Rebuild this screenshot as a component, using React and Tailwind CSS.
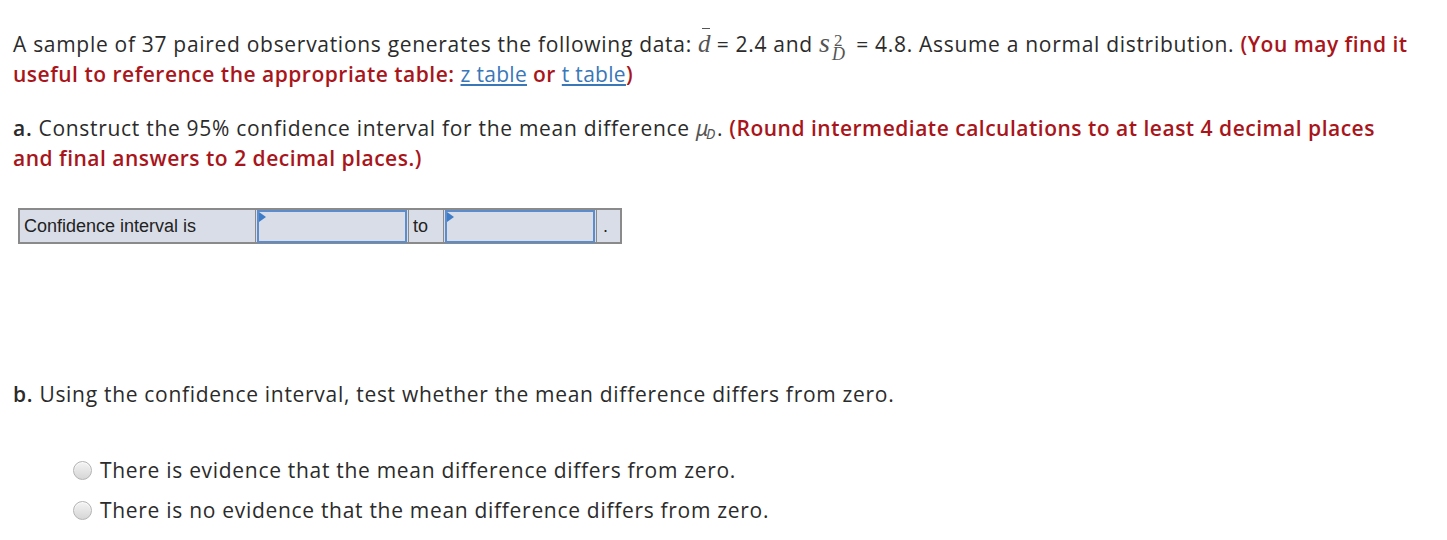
import React from 'react';

const red = 'text-[#a8151b] font-semibold tracking-[0.5px]';

function Radio({ children }) {
  return (
    <label className="flex items-center gap-[8px] h-[40px]">
      <span className="w-[19px] h-[19px] rounded-full border border-[#b3b3b3] bg-gradient-to-b from-[#f4f4f4] to-[#d6d6d6] shadow-[inset_0_1px_1px_rgba(255,255,255,0.8)]" />
      <span>{children}</span>
    </label>
  );
}

function Cell({ children, className = '' }) {
  return (
    <div className={`h-full flex items-center border-r border-[#8a8a8a] ${className}`}>{children}</div>
  );
}

function Field() {
  return (
    <div className="relative h-[33px] w-[150px] border-2 border-[#5d8ccc] bg-[#d9dde8] mx-[1px]">
      <span className="absolute left-0 top-0 w-0 h-0 border-t-[5px] border-b-[5px] border-l-[7px] border-t-transparent border-b-transparent border-l-[#3f7cc8]" />
    </div>
  );
}

export default function App() {
  return (
    <div className="bg-white w-[1447px] h-[540px] pl-[13px] pt-[29px] text-[21px] leading-[30px] tracking-[0.7px] text-[#2b2b2b]" style={{ fontFamily: '"Open Sans", Lato, sans-serif' }}>
      <div className="w-[1400px]">
        <p>
          A sample of 37 paired observations generates the following data:{' '}
          <span className="relative inline-block h-[20px] leading-[20px] tracking-normal" style={{ fontFamily: '"Liberation Serif", serif' }}>
            <span className="italic text-[25px] text-[#555]">d</span>
            <span className="absolute left-[4px] top-[-6px] w-[8px] border-t border-[#555]" />
          </span>{' '}
          = 2.4 and{' '}
          <span className="relative inline-block w-[31px] h-[20px] leading-[20px] tracking-normal text-[#555]" style={{ fontFamily: '"Liberation Serif", serif' }}>
            <span className="italic text-[28px]">s</span>
            <span className="absolute left-[15px] top-[-1px] text-[17px] leading-[17px]">2</span>
            <span className="absolute left-[13px] top-[12px] italic text-[18px] leading-[18px]">D</span>
          </span>{' '}
          = 4.8. Assume a normal distribution. <span className={red}>(You may find it useful to reference the appropriate table: </span>
          <a className="text-[#3a77b8] underline underline-offset-2 tracking-[0.3px]">z table</a>
          <span className={red}> or </span>
          <a className="text-[#3a77b8] underline underline-offset-2 tracking-[0.3px]">t table</a>
          <span className={red}>)</span>
        </p>

        <p className="mt-[24px]">
          <span className="font-semibold">a.</span> Construct the 95% confidence interval for the mean difference{' '}
          <span className="relative inline-block w-[21px] h-[20px] leading-[20px] tracking-normal italic text-[#555]" style={{ fontFamily: '"Noto Sans", sans-serif' }}>
            μ<span className="absolute left-[10px] top-[6px] text-[14px]">D</span>
          </span>
          .{' '}
          <span className={red}>(Round intermediate calculations to at least 4 decimal places and final answers to 2 decimal places.)</span>
        </p>
      </div>

      <div className="mt-[35px] ml-[5px] w-[604px] h-[36px] flex items-center border-2 border-[#8a8a8a] bg-[#d9dde8] text-[18px] tracking-normal text-[#222]" style={{ fontFamily: '"Liberation Sans", Arial, sans-serif' }}>
        <Cell className="w-[236px] pl-[4px]">Confidence interval is</Cell>
        <Field />
        <Cell className="w-[36px] pl-[4px] border-l border-[#8a8a8a]">to</Cell>
        <Field />
        <div className="h-full flex items-center pl-[6px] border-l border-[#8a8a8a] flex-1">.</div>
      </div>

      <p className="mt-[135px]">
        <span className="font-semibold">b.</span> Using the confidence interval, test whether the mean difference differs from zero.
      </p>

      <div className="mt-[41px] ml-[60px]">
        <Radio>There is evidence that the mean difference differs from zero.</Radio>
        <Radio>There is no evidence that the mean difference differs from zero.</Radio>
      </div>
    </div>
  );
}
